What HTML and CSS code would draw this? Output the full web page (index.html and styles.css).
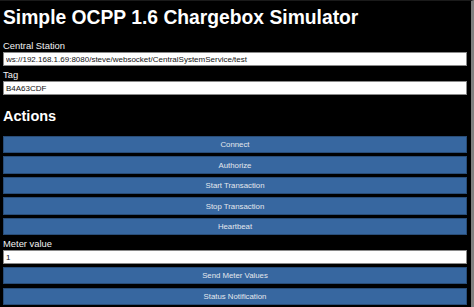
FILE: index.html
```html
<!DOCTYPE html>
<html>
<head>
<meta charset="utf-8">
<title>Simple OCPP 1.6 Chargebox Simulator</title>
<link rel="stylesheet" href="styles.css">
</head>
<body>
<div class="page">
  <h1 class="title">Simple OCPP 1.6 Chargebox Simulator</h1>
  <label class="label" for="cs">Central Station</label>
  <input class="field" id="cs" type="text" value="ws://192.168.1.69:8080/steve/websocket/CentralSystemService/test">
  <label class="label label-gap" for="tag">Tag</label>
  <input class="field" id="tag" type="text" value="B4A63CDF">
  <h2 class="section">Actions</h2>
  <div class="buttons">
    <button class="btn">Connect</button>
    <button class="btn">Authorize</button>
    <button class="btn">Start Transaction</button>
    <button class="btn">Stop Transaction</button>
    <button class="btn">Heartbeat</button>
  </div>
  <label class="label meter-label" for="mv">Meter value</label>
  <input class="field" id="mv" type="text" value="1">
  <div class="buttons buttons-after">
    <button class="btn">Send Meter Values</button>
    <button class="btn">Status Notification</button>
  </div>
</div>
</body>
</html>
```

FILE: styles.css
```css
html, body {
  margin: 0;
  padding: 0;
  background: #000;
}
body {
  font-family: "Liberation Sans", Arial, sans-serif;
  color: #fff;
}
.page {
  box-sizing: border-box;
  width: 474px;
  height: 307px;
  overflow: hidden;
  padding: 0 4px 0 3px;
  border-right: 3px solid #808080;
  border-top: 1px solid #1a1a1a;
}
.title {
  margin: 0;
  padding-top: 5px;
  font-size: 19.3px;
  line-height: 24px;
  font-weight: bold;
  color: #fff;
}
.label {
  display: block;
  margin-top: 10px;
  font-size: 9.4px;
  line-height: 12px;
  color: #f2f2f2;
}
.label-gap {
  margin-top: 3px;
}
.field {
  display: block;
  box-sizing: border-box;
  width: 100%;
  height: 14px;
  margin: 0;
  padding: 0 2px;
  border: 1px solid #8a8a8a;
  background: #fff;
  color: #111;
  font-family: "Liberation Sans", Arial, sans-serif;
  font-size: 8px;
  line-height: 12px;
  outline: none;
}
.section {
  margin: 12px 0 0 0;
  font-size: 14.5px;
  line-height: 18px;
  font-weight: bold;
  color: #fff;
}
.buttons {
  display: flex;
  flex-direction: column;
  gap: 3.3px;
  margin-top: 11px;
}
.buttons-after {
  margin-top: 3px;
}
.btn {
  display: block;
  box-sizing: border-box;
  width: 100%;
  height: 17.2px;
  margin: 0;
  padding: 0;
  border: 1px solid #294d78;
  background: #3767a0;
  color: #e4e8ee;
  font-family: "Liberation Sans", Arial, sans-serif;
  font-size: 7.8px;
  line-height: 15px;
  text-align: center;
}
.meter-label {
  margin-top: 3px;
}
```
